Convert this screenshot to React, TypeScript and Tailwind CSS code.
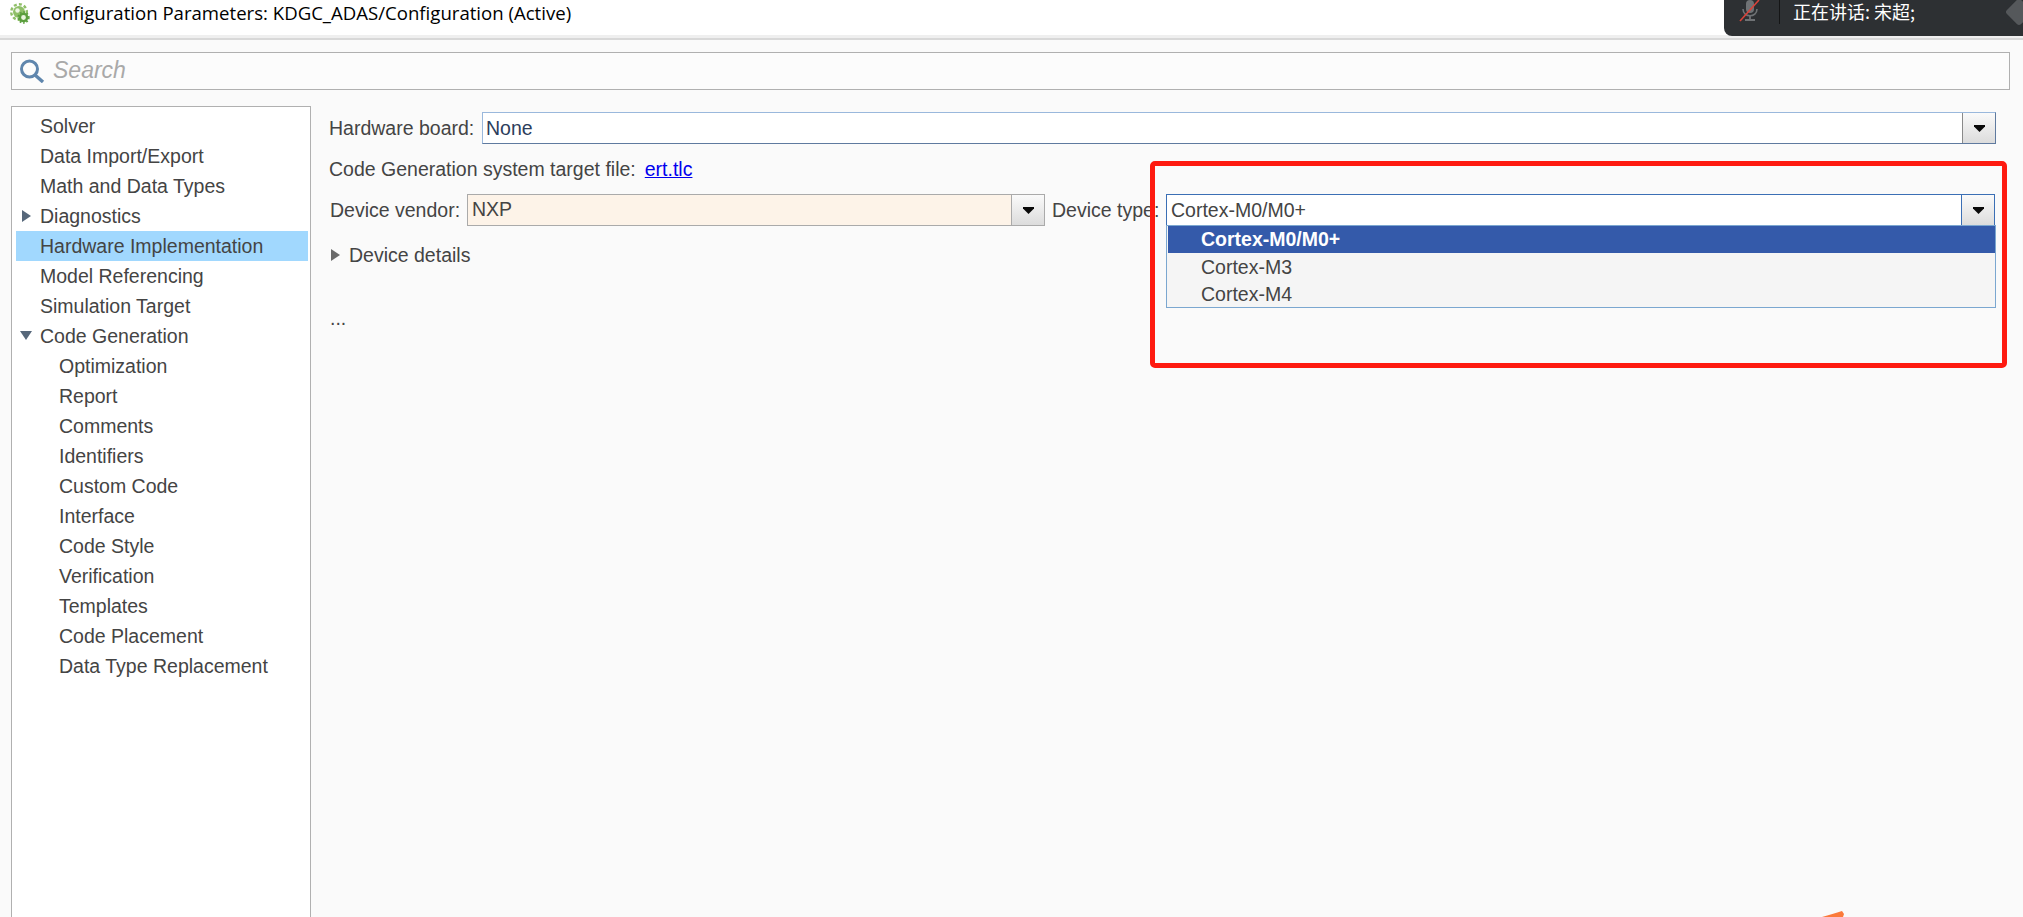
import React from "react";

const arial = "font-['Liberation_Sans',Arial,sans-serif]";

const topRows = ["Solver", "Data Import/Export", "Math and Data Types"];
const codeRows = [
  "Optimization",
  "Report",
  "Comments",
  "Identifiers",
  "Custom Code",
  "Interface",
  "Code Style",
  "Verification",
  "Templates",
  "Code Placement",
  "Data Type Replacement",
];

function Arrow() {
  return (
    <svg width="11" height="7" viewBox="0 0 11 7">
      <path d="M0 0h11v1.5L5.5 7 0 1.5z" fill="#0a0a0a" />
    </svg>
  );
}

function ArrowButton({ className }: { className: string }) {
  return (
    <div className={`flex h-full w-[33px] shrink-0 items-center justify-center bg-gradient-to-b from-[#fafafa] to-[#dcdcdc] ${className}`}>
      <Arrow />
    </div>
  );
}

function GearLogo() {
  return (
    <svg width="20" height="21" viewBox="0 0 20 21" className="shrink-0">
      <circle cx="9" cy="9" r="6" fill="#8fbf68" />
      <circle cx="9" cy="9" r="7.8" fill="none" stroke="#8fbf68" strokeWidth="2.4" strokeDasharray="3 2.2" />
      <circle cx="7.5" cy="7.5" r="2.2" fill="#eef6e4" />
      <circle cx="13.5" cy="14.5" r="3.6" fill="#e9f4dc" stroke="#5a9e3c" strokeWidth="2.4" />
      <circle cx="13.5" cy="14.5" r="5.4" fill="none" stroke="#5a9e3c" strokeWidth="1.5" strokeDasharray="1.8 1.7" />
    </svg>
  );
}

function SearchIcon() {
  return (
    <svg width="26" height="24" viewBox="0 0 26 24" className="shrink-0">
      <circle cx="10.5" cy="10" r="8" fill="none" stroke="#5f86ad" strokeWidth="3" />
      <path d="M16 16l8 7" stroke="#5f86ad" strokeWidth="3.4" fill="none" />
    </svg>
  );
}

function MicIcon() {
  return (
    <svg width="22" height="22" viewBox="0 0 22 22">
      <rect x="7" y="0" width="8" height="13" rx="4" fill="#6f7275" />
      <path d="M4 9c0 9 14 9 14 0" fill="none" stroke="#6f7275" strokeWidth="1.6" />
      <path d="M11 15v4M6 20h10" stroke="#6f7275" strokeWidth="1.8" />
      <path d="M1 21L20 0" stroke="#d9433a" strokeWidth="1.6" />
    </svg>
  );
}

function Row({ label, indent, caret, selected }: { label: string; indent?: boolean; caret?: "right" | "down"; selected?: boolean }) {
  return (
    <div className={`relative flex h-[30px] items-center pt-[2px] ${indent ? "pl-[43px]" : "pl-[24px]"} ${selected ? "bg-[#a1d8fe]" : ""}`}>
      {caret === "right" && (
        <svg width="9" height="12" viewBox="0 0 9 12" className="absolute left-[6px] top-[9px]">
          <path d="M0 0l9 6-9 6z" fill="#56677a" />
        </svg>
      )}
      {caret === "down" && (
        <svg width="12" height="9" viewBox="0 0 12 9" className="absolute left-[4px] top-[10px]">
          <path d="M0 0h12L6 9z" fill="#56677a" />
        </svg>
      )}
      {label}
    </div>
  );
}

export default function App() {
  return (
    <div className={`relative flex h-[917px] w-[2023px] flex-col overflow-hidden bg-[#fafafa] text-[19.5px] leading-none text-[#444] ${arial}`}>
      <header className="flex h-[35px] shrink-0 items-center gap-[9px] bg-white pb-[9px] pl-[10px]">
        <GearLogo />
        <span className="font-['Open_Sans',sans-serif] text-[18.6px] text-black">Configuration Parameters: KDGC_ADAS/Configuration (Active)</span>
      </header>
      <div className="h-[5px] shrink-0 border-b-2 border-[#d8d8d8] bg-[#efefef]" />

      <div className="mx-[11px] mt-[12px] flex h-[38px] w-[1999px] shrink-0 items-center gap-[8px] border border-[#b0b0b0] bg-[#fcfcfc] pl-[7px]">
        <SearchIcon />
        <span className="-mt-[2px] text-[23px] italic text-[#a9a9a9]">Search</span>
      </div>

      <div className="mt-[16px] flex min-h-0 flex-1 pl-[11px]">
        <nav className="w-[300px] shrink-0 border border-b-0 border-[#b0b0b0] bg-white pl-[4px] pr-[2px] pt-[4px]">
          {topRows.map((r) => (
            <Row key={r} label={r} />
          ))}
          <Row label="Diagnostics" caret="right" />
          <Row label="Hardware Implementation" selected />
          <Row label="Model Referencing" />
          <Row label="Simulation Target" />
          <Row label="Code Generation" caret="down" />
          {codeRows.map((r) => (
            <Row key={r} label={r} indent />
          ))}
        </nav>

        <main className="flex-1 pl-[18px] pt-[6px]">
          <div className="flex h-[32px] items-center gap-[7px]">
            <span className="w-[146px] shrink-0 whitespace-nowrap pt-[2px]">Hardware board:</span>
            <div className="flex h-full w-[1514px] items-center justify-between border border-b-[#5f7a9f] border-l-[#9ab8dc] border-r-[#5f7a9f] border-t-[#9ab8dc] bg-white pl-[3px] text-[#2c3e5c]">
              <span className="pt-[1px]">None</span>
              <ArrowButton className="border-l border-[#8a8a8a]" />
            </div>
          </div>

          <div className="mb-[1px] mt-[9px] flex h-[32px] items-center pt-[2px]">
            <span className="whitespace-nowrap">Code Generation system target file:</span>
            <span className="ml-[9px] text-[#0000ee] underline">ert.tlc</span>
          </div>

          <div className="mt-[9px] flex h-[32px] items-center pl-[1px]">
            <span className="w-[137px] shrink-0 whitespace-nowrap pt-[2px]">Device vendor:</span>
            <div className="flex h-full w-[578px] shrink-0 items-center justify-between border border-[#aaaaaa] bg-[#fdf3e8] pl-[4px]">
              <span className="-mt-[1px]">NXP</span>
              <ArrowButton className="border-l border-[#aaaaaa]" />
            </div>
            <span className="ml-[7px] w-[114px] shrink-0 whitespace-nowrap pt-[2px]">Device type:</span>
            <div className="relative h-full w-[829px] shrink-0">
              <div className="flex h-full items-center justify-between border border-b-0 border-[#3b6fb5] bg-white pl-[4px]">
                <span className="pt-[1px]">Cortex-M0/M0+</span>
                <ArrowButton className="border-l border-[#3b6fb5]" />
              </div>
              <div className="absolute left-0 top-[31px] h-[83px] w-[830px] border border-[#7ba7d0] bg-[#f5f5f5]">
                <div className="ml-px flex h-[27px] items-center bg-[#345aaa] pl-[33px] pt-[1px] font-bold text-white">Cortex-M0/M0+</div>
                <div className="flex h-[27px] items-center pl-[34px] pt-[2px]">Cortex-M3</div>
                <div className="flex h-[27px] items-center pl-[34px] pt-[2px]">Cortex-M4</div>
              </div>
            </div>
          </div>

          <div className="mt-[13px] flex h-[32px] items-center">
            <svg width="9" height="12" viewBox="0 0 9 12" className="ml-[2px] shrink-0">
              <path d="M0 0l9 6-9 6z" fill="#6a6a6a" />
            </svg>
            <span className="ml-[9px] pt-[2px]">Device details</span>
          </div>

          <div className="mt-[32px] flex h-[32px] items-center pl-[1px]">...</div>
        </main>
      </div>

      <div className="absolute left-[1150px] top-[161px] h-[207px] w-[857px] rounded-[5px] border-[5px] border-[#fe1a10]" />

      <div className="absolute right-0 top-0 flex h-[36px] w-[299px] items-start rounded-bl-[8px] bg-[#2d3033]">
        <div className="ml-[15px] w-[22px]">
          <MicIcon />
        </div>
        <div className="ml-[18px] h-[24px] w-px bg-[#141516]" />
        <span className="ml-[13px] mt-[1px] font-['Noto_Sans_CJK_SC',sans-serif] text-[18px] leading-[20px] text-white">正在讲话: 宋超;</span>
        <div className="absolute right-[-6px] top-[2px] h-[20px] w-[20px] rotate-45 rounded-[3px] bg-[#55585b]" />
      </div>

      <svg width="22" height="6" viewBox="0 0 22 6" className="absolute left-[1822px] top-[911px]">
        <path d="M0 6C7 4 14 2 20 0l2 3-1 3z" fill="#fb7a3a" />
      </svg>
    </div>
  );
}
